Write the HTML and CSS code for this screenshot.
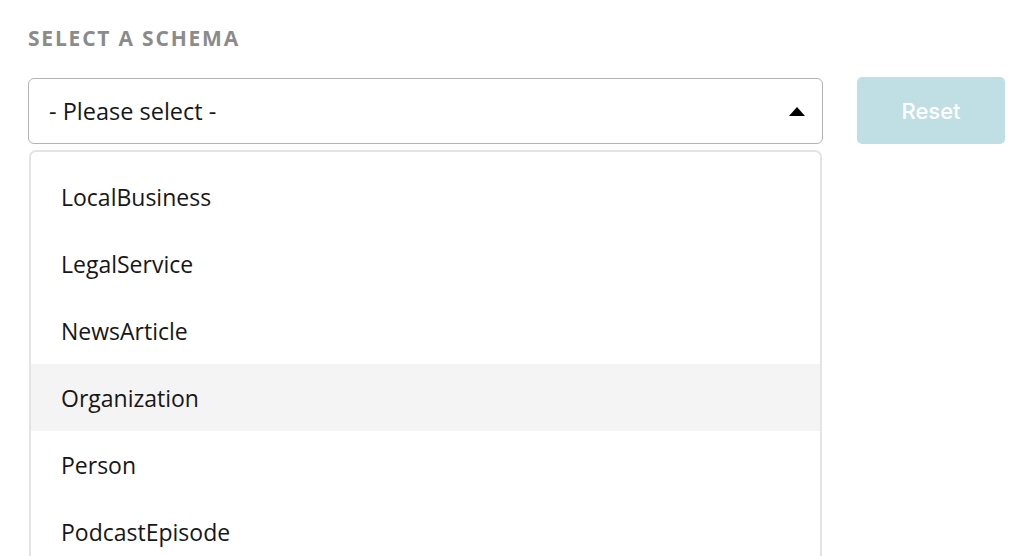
FILE: index.html
```html
<!DOCTYPE html>
<html lang="en">
<head>
<meta charset="utf-8">
<title>Select a schema</title>
<link rel="stylesheet" href="styles.css">
</head>
<body>
<div class="page">
  <div class="label">SELECT A SCHEMA</div>
  <div class="row">
    <div class="select-wrap">
      <div class="select">
        <span class="select-text">- Please select -</span>
        <svg class="caret" width="16" height="9" viewBox="0 0 16 9"><path d="M0 9 L8 0 L16 9 Z" fill="#000"/></svg>
      </div>
      <ul class="menu">
        <li class="item">LocalBusiness</li>
        <li class="item">LegalService</li>
        <li class="item">NewsArticle</li>
        <li class="item active">Organization</li>
        <li class="item">Person</li>
        <li class="item">PodcastEpisode</li>
      </ul>
    </div>
    <button class="reset">Reset</button>
  </div>
</div>
</body>
</html>
```

FILE: styles.css
```css
html, body {
  margin: 0;
  padding: 0;
  height: 556px;
  overflow: hidden;
  background: #fff;
}
body {
  font-family: "Open Sans", "Noto Sans", sans-serif;
  color: #171717;
}
.page {
  box-sizing: border-box;
  height: 556px;
  padding: 26px 19px 0 28px;
  overflow: hidden;
}
.label {
  font-size: 21px;
  font-weight: 700;
  letter-spacing: 1.8px;
  color: #8b8b8b;
  line-height: 24px;
}
.row {
  display: flex;
  gap: 34px;
  margin-top: 28px;
  align-items: flex-start;
}
.select-wrap {
  display: flex;
  flex-direction: column;
  width: 795px;
}
.select {
  box-sizing: border-box;
  height: 66px;
  border: 1.5px solid #b3b3b3;
  border-radius: 6px;
  display: flex;
  align-items: center;
  justify-content: space-between;
  padding: 0 17px 0 20px;
}
.select-text {
  font-size: 23.5px;
}
.caret {
  display: block;
}
.menu {
  box-sizing: border-box;
  margin: 6px 1px 0;
  padding: 11px 0 0;
  list-style: none;
  border: 2px solid #e4e4e4;
  border-bottom: none;
  border-radius: 7px 7px 0 0;
  background: #fff;
  height: 420px;
}
.item {
  height: 67px;
  display: flex;
  align-items: center;
  padding-left: 30px;
  font-size: 23px;
}
.item.active {
  background: #f4f4f4;
}
.reset {
  width: 148px;
  height: 67px;
  border: none;
  border-radius: 5px;
  background: #c0dfe4;
  color: #fff;
  font-family: "Inter", "Liberation Sans", sans-serif;
  font-size: 22px;
  font-weight: 500;
  padding: 0;
  margin-top: -1px;
}
```
